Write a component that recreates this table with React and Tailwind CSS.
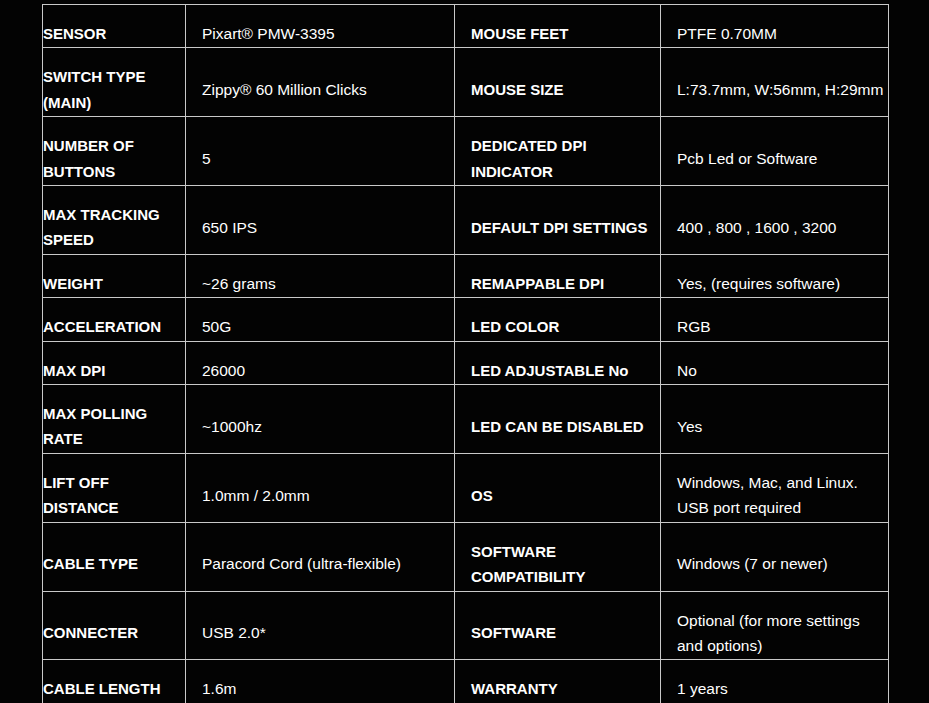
const rows = [
  ['SENSOR', 'Pixart® PMW-3395', 'MOUSE FEET', 'PTFE 0.70MM'],
  ['SWITCH TYPE (MAIN)', 'Zippy® 60 Million Clicks', 'MOUSE SIZE', 'L:73.7mm, W:56mm, H:29mm'],
  ['NUMBER OF BUTTONS', '5', 'DEDICATED DPI INDICATOR', 'Pcb Led or Software'],
  ['MAX TRACKING SPEED', '650 IPS', 'DEFAULT DPI SETTINGS', '400 , 800 , 1600 , 3200'],
  ['WEIGHT', '~26 grams', 'REMAPPABLE DPI', 'Yes, (requires software)'],
  ['ACCELERATION', '50G', 'LED COLOR', 'RGB'],
  ['MAX DPI', '26000', 'LED ADJUSTABLE No', 'No'],
  ['MAX POLLING RATE', '~1000hz', 'LED CAN BE DISABLED', 'Yes'],
  ['LIFT OFF DISTANCE', '1.0mm / 2.0mm', 'OS', 'Windows, Mac, and Linux. USB port required'],
  ['CABLE TYPE', 'Paracord Cord (ultra-flexible)', 'SOFTWARE COMPATIBILITY', 'Windows (7 or newer)'],
  ['CONNECTER', 'USB 2.0*', 'SOFTWARE', 'Optional (for more settings and options)'],
  ['CABLE LENGTH', '1.6m', 'WARRANTY', '1 years'],
];

// label cells bold at 15px, value cells a touch wider
const cell = 'border-r border-b border-[#c9c9c9] pt-4 pb-px leading-[25.4px] flex items-center';

export default function App() {
  return (
    <div className="min-h-screen bg-[#030303] pt-1 font-['Liberation_Sans',Arial,sans-serif] text-white">
      <div className="ml-[42px] grid w-[847px] grid-cols-[143px_269px_206px_228px] border-l border-t border-[#c9c9c9]">
        {rows.map((r) => (
          <div key={r[0]} className="contents">
            <div className={`${cell} text-[15px] font-bold`}>{r[0]}</div>
            <div className={`${cell} pl-4 text-[15.5px]`}>{r[1]}</div>
            <div className={`${cell} pl-4 text-[15px] font-bold`}>{r[2]}</div>
            <div className={`${cell} pl-4 text-[15.5px]`}>{r[3]}</div>
          </div>
        ))}
      </div>
    </div>
  );
}
